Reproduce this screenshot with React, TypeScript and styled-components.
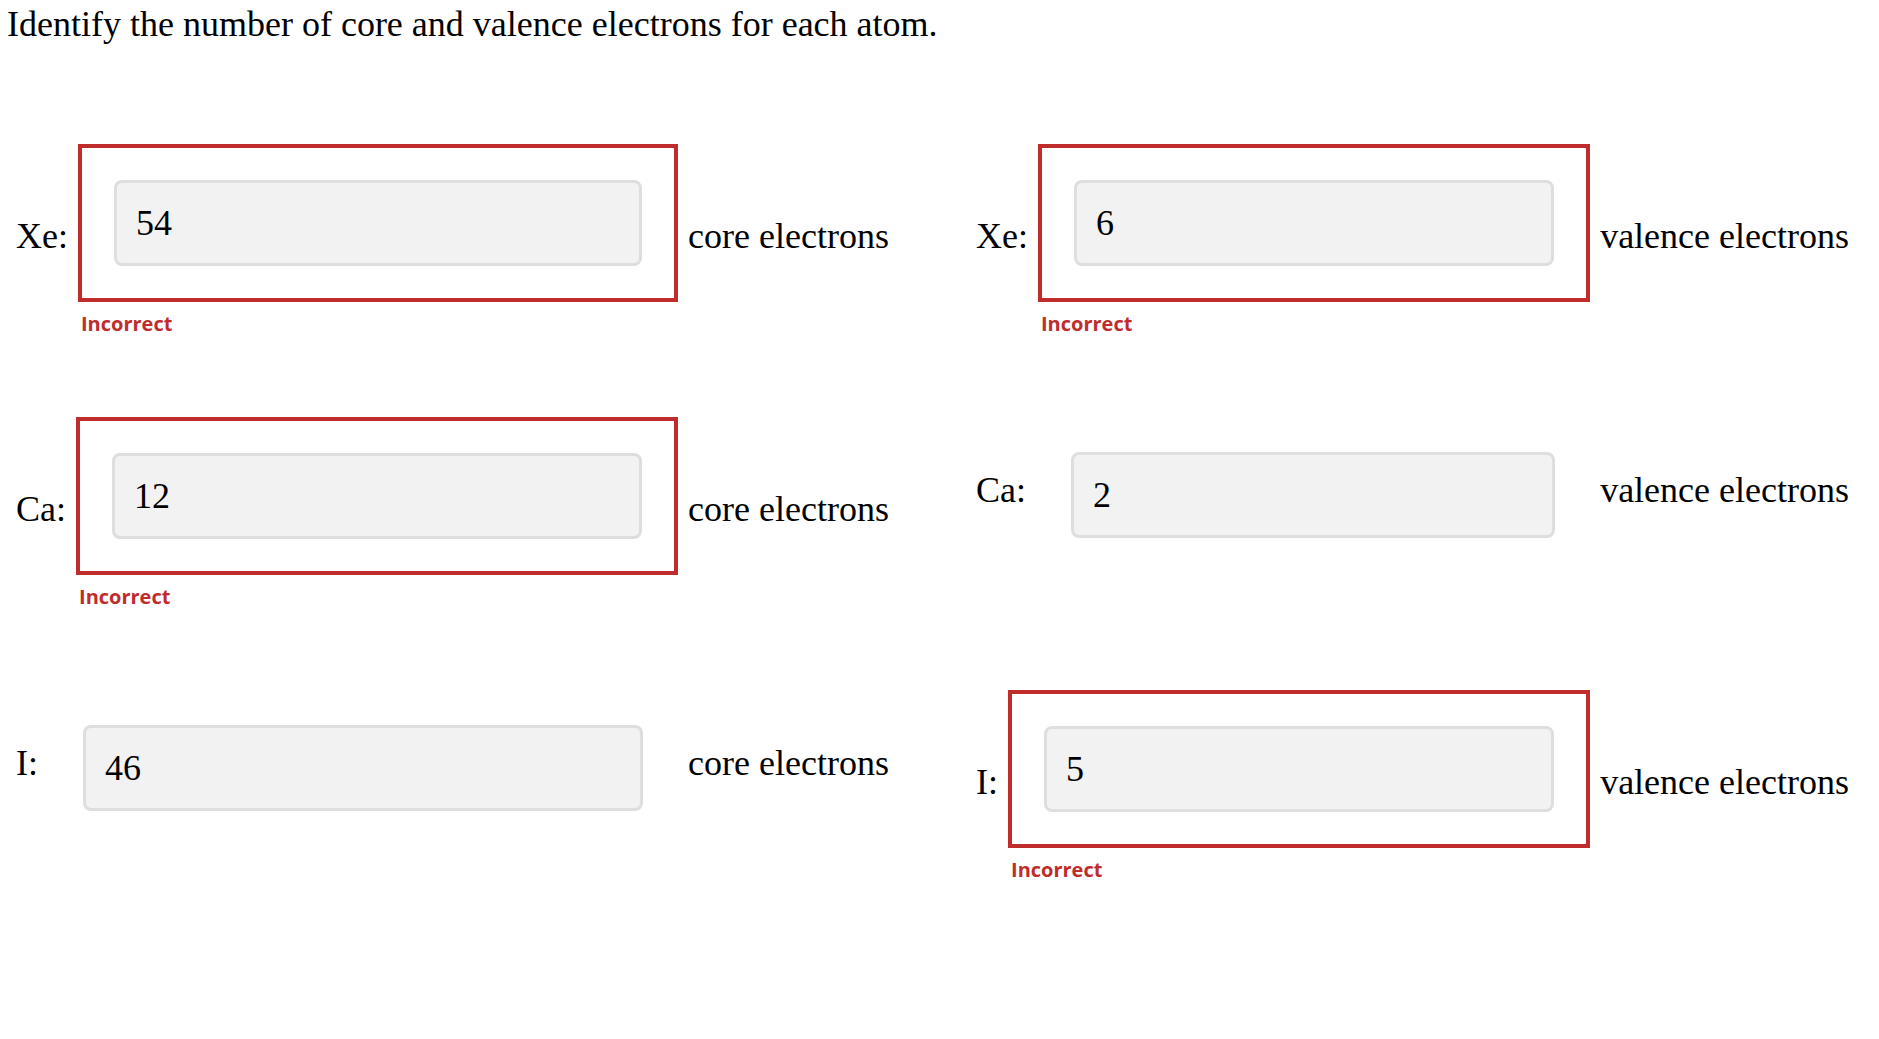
import React from "react";
import styled, { createGlobalStyle } from "styled-components";

const GlobalStyle = createGlobalStyle`
  body {
    margin: 0;
    background: #ffffff;
    color: #000000;
    font-family: "Liberation Serif", "Times New Roman", serif;
  }
`;

const Page = styled.main`
  padding: 3px 30px 0 16px;
`;

const Prompt = styled.p`
  margin: 0 0 99px -9px;
  font-size: 36px;
`;

const QuestionGrid = styled.div`
  display: grid;
  grid-template-columns: 1fr 1fr;
  column-gap: 87px;
  row-gap: 80px;
  align-items: start;
`;

const Question = styled.div`
  display: flex;
  align-items: center;
  gap: 10px;
  font-size: 36px;
`;

const Label = styled.span`
  flex: none;
  padding-bottom: 10px;
`;

const Unit = styled.span`
  flex: none;
  padding-bottom: 10px;
`;

const Field = styled.div`
  flex: 1;
  min-width: 0;
  display: flex;
  flex-direction: column;
`;

const AnswerBox = styled.div<{ $wrong: boolean }>`
  border: ${(p) => (p.$wrong ? "4px solid #c02c2c" : "3px solid transparent")};
  padding: 32px;
`;

const AnswerInput = styled.input`
  display: block;
  width: 100%;
  box-sizing: border-box;
  height: 86px;
  padding: 0 19px;
  border: 3px solid #dedede;
  border-radius: 8px;
  background: #f2f2f2;
  font-family: "Liberation Serif", "Times New Roman", serif;
  font-size: 36px;
  color: #000000;
  outline: none;
`;

const Feedback = styled.div`
  margin-top: 8px;
  padding-left: 3px;
  font-family: "Open Sans", "Noto Sans", sans-serif;
  font-weight: 700;
  font-size: 20px;
  color: #c02c2c;
`;

interface Answer {
  atom: string;
  value: string;
  unit: string;
  wrong: boolean;
}

const answers: Answer[] = [
  { atom: "Xe", value: "54", unit: "core electrons", wrong: true },
  { atom: "Xe", value: "6", unit: "valence electrons", wrong: true },
  { atom: "Ca", value: "12", unit: "core electrons", wrong: true },
  { atom: "Ca", value: "2", unit: "valence electrons", wrong: false },
  { atom: "I", value: "46", unit: "core electrons", wrong: false },
  { atom: "I", value: "5", unit: "valence electrons", wrong: true },
];

export default function App() {
  return (
    <>
      <GlobalStyle />
      <Page>
        <Prompt>Identify the number of core and valence electrons for each atom.</Prompt>
        <QuestionGrid>
          {answers.map(({ atom, value, unit, wrong }, i) => (
            <Question key={i}>
              <Label>{atom}:</Label>
              <Field>
                <AnswerBox $wrong={wrong}>
                  <AnswerInput type="text" value={value} readOnly />
                </AnswerBox>
                {wrong && <Feedback>Incorrect</Feedback>}
              </Field>
              <Unit>{unit}</Unit>
            </Question>
          ))}
        </QuestionGrid>
      </Page>
    </>
  );
}
